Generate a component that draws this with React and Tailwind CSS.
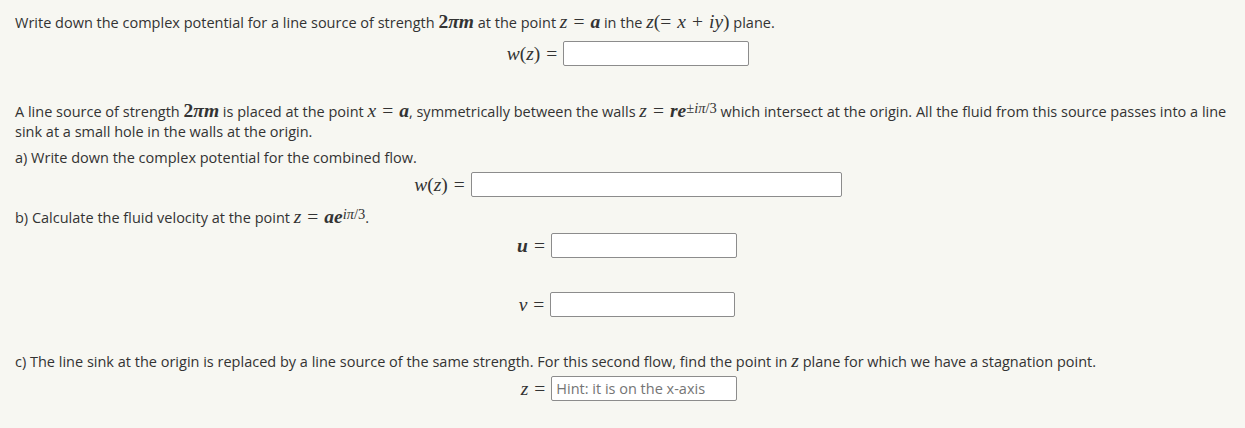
import React from "react";

const Mi = ({ children, b }) => (
  <span className={`font-['Liberation_Serif',serif] italic text-[19.5px] leading-[1] ${b ? "font-bold" : ""}`}>{children}</span>
);
const Mn = ({ children, b }) => (
  <span className={`font-['Liberation_Serif',serif] text-[19.5px] leading-[1] ${b ? "font-bold" : ""}`}>{children}</span>
);
const Rel = ({ children, nl }) => (
  <span className={`font-['Liberation_Serif',serif] text-[19.5px] leading-[1] mr-[6px] ${nl ? "" : "ml-[6px]"}`}>{children}</span>
);
const Bin = ({ children }) => (
  <span className="font-['Liberation_Serif',serif] text-[19.5px] leading-[1] mx-[6px]">{children}</span>
);

const Box = ({ w, placeholder }) => (
  <div
    className={`h-[25px] ${w} bg-white border border-[#8c8c8c] rounded-[2px] flex items-center px-[4px] text-[14.5px] text-[#757575]`}
  >
    {placeholder}
  </div>
);

export default function App() {
  return (
    <div className="min-h-[428px] bg-[#f7f7f2] text-[#333333] font-['Open_Sans',sans-serif] text-[14.5px] leading-[20px] pl-[15px] pr-[4px] pt-[12px]">
      <p className="whitespace-nowrap">
        Write down the complex potential for a line source of strength{" "}
        <Mn b>2</Mn>
        <Mi b>πm</Mi> at the point <Mi>z</Mi>
        <Rel>=</Rel>
        <Mi b>a</Mi> in the <Mi>z</Mi>
        <Mn>(</Mn>
        <Rel nl>=</Rel>
        <Mi>x</Mi>
        <Bin>+</Bin>
        <Mi>iy</Mi>
        <Mn>)</Mn> plane.
      </p>
      <div className="flex justify-center items-center mt-[8px]">
        <Mi>w</Mi>
        <Mn>(</Mn>
        <Mi>z</Mi>
        <Mn>)</Mn>
        <Rel>=</Rel>
        <Box w="w-[186px]" />
      </div>

      <p className="mt-[35px] whitespace-nowrap">
        A line source of strength <Mn b>2</Mn>
        <Mi b>πm</Mi> is placed at the point <Mi>x</Mi>
        <Rel>=</Rel>
        <Mi b>a</Mi>, symmetrically between the walls <Mi>z</Mi>
        <Rel>=</Rel>
        <Mi b>re</Mi>
        <sup className="font-['Liberation_Serif',serif] text-[14.5px] relative -top-[4px]">
          ±<i>iπ</i>/3
        </sup>{" "}
        which intersect at the origin. All the fluid from this source passes into a line
        <br />
        sink at a small hole in the walls at the origin.
      </p>

      <p className="mt-[6px]">a) Write down the complex potential for the combined flow.</p>
      <div className="flex justify-center items-center mt-[4px]">
        <Mi>w</Mi>
        <Mn>(</Mn>
        <Mi>z</Mi>
        <Mn>)</Mn>
        <Rel>=</Rel>
        <Box w="w-[371px]" />
      </div>

      <p className="mt-[10px]">
        b) Calculate the fluid velocity at the point <Mi>z</Mi>
        <Rel>=</Rel>
        <Mi b>ae</Mi>
        <sup className="font-['Liberation_Serif',serif] text-[14.5px] relative -top-[4px]">
          <i>iπ</i>/3
        </sup>
        .
      </p>
      <div className="flex justify-center items-center mt-[5px] pr-[2px]">
        <Mi b>u</Mi>
        <Rel>=</Rel>
        <Box w="w-[186px]" />
      </div>
      <div className="flex justify-center items-center mt-[34px] pr-[2px]">
        <Mi>v</Mi>
        <Rel>=</Rel>
        <Box w="w-[185px]" />
      </div>

      <p className="mt-[34px]">
        c) The line sink at the origin is replaced by a line source of the same strength. For this second flow, find the point in{" "}
        <Mi>z</Mi> plane for which we have a stagnation point.
      </p>
      <div className="flex justify-center items-center mt-[4px] pl-[2px]">
        <Mi>z</Mi>
        <Rel>=</Rel>
        <Box w="w-[186px]" placeholder="Hint: it is on the x-axis" />
      </div>
    </div>
  );
}
